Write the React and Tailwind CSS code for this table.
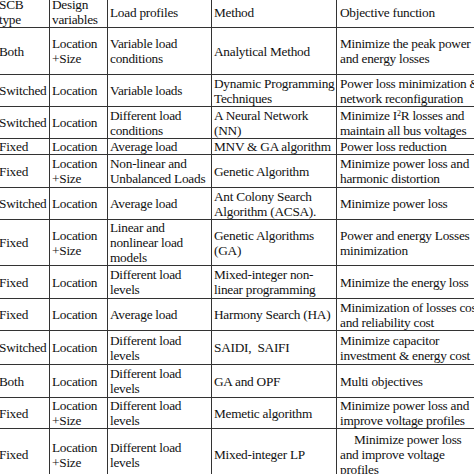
const rows = [
  { h: 'h-[47px]', c: ['Both', ['Location', '+Size'], ['Variable load', 'conditions'], ['Analytical Method'], ['Minimize the peak power', 'and energy losses']] },
  { h: 'h-[32px]', c: ['Switched', ['Location'], ['Variable loads'], ['Dynamic Programming', 'Techniques'], ['Power loss minimization &', 'network reconfiguration']] },
  { h: 'h-[32px]', c: ['Switched', ['Location'], ['Different load', 'conditions'], ['A Neural Network', '(NN)'], ['I2R', 'maintain all bus voltages']] },
  { h: 'h-[15px]', c: ['Fixed', ['Location'], ['Average load'], ['MNV & GA algorithm'], ['Power loss reduction']] },
  { h: 'h-[33px]', c: ['Fixed', ['Location', '+Size'], ['Non-linear and', 'Unbalanced Loads'], ['Genetic Algorithm'], ['Minimize power loss and', 'harmonic distortion']] },
  { h: 'h-[32px]', c: ['Switched', ['Location'], ['Average load'], ['Ant Colony Search', 'Algorithm (ACSA).'], ['Minimize power loss']] },
  { h: 'h-[46px]', c: ['Fixed', ['Location', '+Size'], ['Linear and', 'nonlinear load', 'models'], ['Genetic Algorithms', '(GA)'], ['Power and energy Losses', 'minimization']] },
  { h: 'h-[33px]', c: ['Fixed', ['Location'], ['Different load', 'levels'], ['Mixed-integer non-', 'linear programming'], ['Minimize the energy loss']] },
  { h: 'h-[32px]', c: ['Fixed', ['Location'], ['Average load'], ['Harmony Search (HA)'], ['Minimization of losses cost', 'and reliability cost']] },
  { h: 'h-[34px]', c: ['Switched', ['Location'], ['Different load', 'levels'], ['SAIDI,\u00a0 SAIFI'], ['Minimize capacitor', 'investment & energy cost']] },
  { h: 'h-[33px]', c: ['Both', ['Location'], ['Different load', 'levels'], ['GA and OPF'], ['Multi objectives']] },
  { h: 'h-[31px]', c: ['Fixed', ['Location', '+Size'], ['Different load', 'levels'], ['Memetic algorithm'], ['Minimize power loss and', 'improve voltage profiles']] },
  { h: 'h-[52px]', c: ['Fixed', ['Location', '+Size'], ['Different load', 'levels'], ['Mixed-integer LP'], ['indent', 'and improve voltage', 'profiles']] },
];

const Lines = ({ lines }) => {
  if (lines[0] === 'I2R') {
    return (
      <>
        <div>Minimize I<sup className="text-[8px]">2</sup>R losses and</div>
        <div>{lines[1]}</div>
      </>
    );
  }
  if (lines[0] === 'indent') {
    return (
      <>
        <div className="pl-[14px]">Minimize power loss</div>
        {lines.slice(1).map((l) => <div key={l}>{l}</div>)}
      </>
    );
  }
  return lines.map((l) => <div key={l}>{l}</div>);
};

const cell = 'border border-[#333] px-[2px] align-middle whitespace-nowrap overflow-hidden';

export default function App() {
  return (
    <div className="w-[474px] h-[474px] overflow-hidden bg-white">
      <table className="table-fixed w-[500px] border-collapse ml-[-4px] mt-[-4px] font-['Liberation_Serif',serif] text-[13.3px] tracking-[-0.25px] leading-[15px] text-[#111]">
        <colgroup>
          <col className="w-[53px]" />
          <col className="w-[58px]" />
          <col className="w-[104px]" />
          <col className="w-[125px]" />
          <col className="w-[160px]" />
        </colgroup>
        <thead>
          <tr>
            <td className={cell + ' h-[31px]'}><div>SCB</div><div>type</div></td>
            <td className={cell}><div>Design</div><div>variables</div></td>
            <td className={cell}>Load profiles</td>
            <td className={cell}>Method</td>
            <td className={cell + ' pl-[3px]'}>Objective function</td>
          </tr>
        </thead>
        <tbody>
          {rows.map((r, i) => (
            <tr key={i}>
              <td className={cell + ' ' + r.h}>{r.c[0]}</td>
              <td className={cell}><Lines lines={r.c[1]} /></td>
              <td className={cell}><Lines lines={r.c[2]} /></td>
              <td className={cell}><Lines lines={r.c[3]} /></td>
              <td className={cell + ' pl-[3px]'}><Lines lines={r.c[4]} /></td>
            </tr>
          ))}
        </tbody>
      </table>
    </div>
  );
}
